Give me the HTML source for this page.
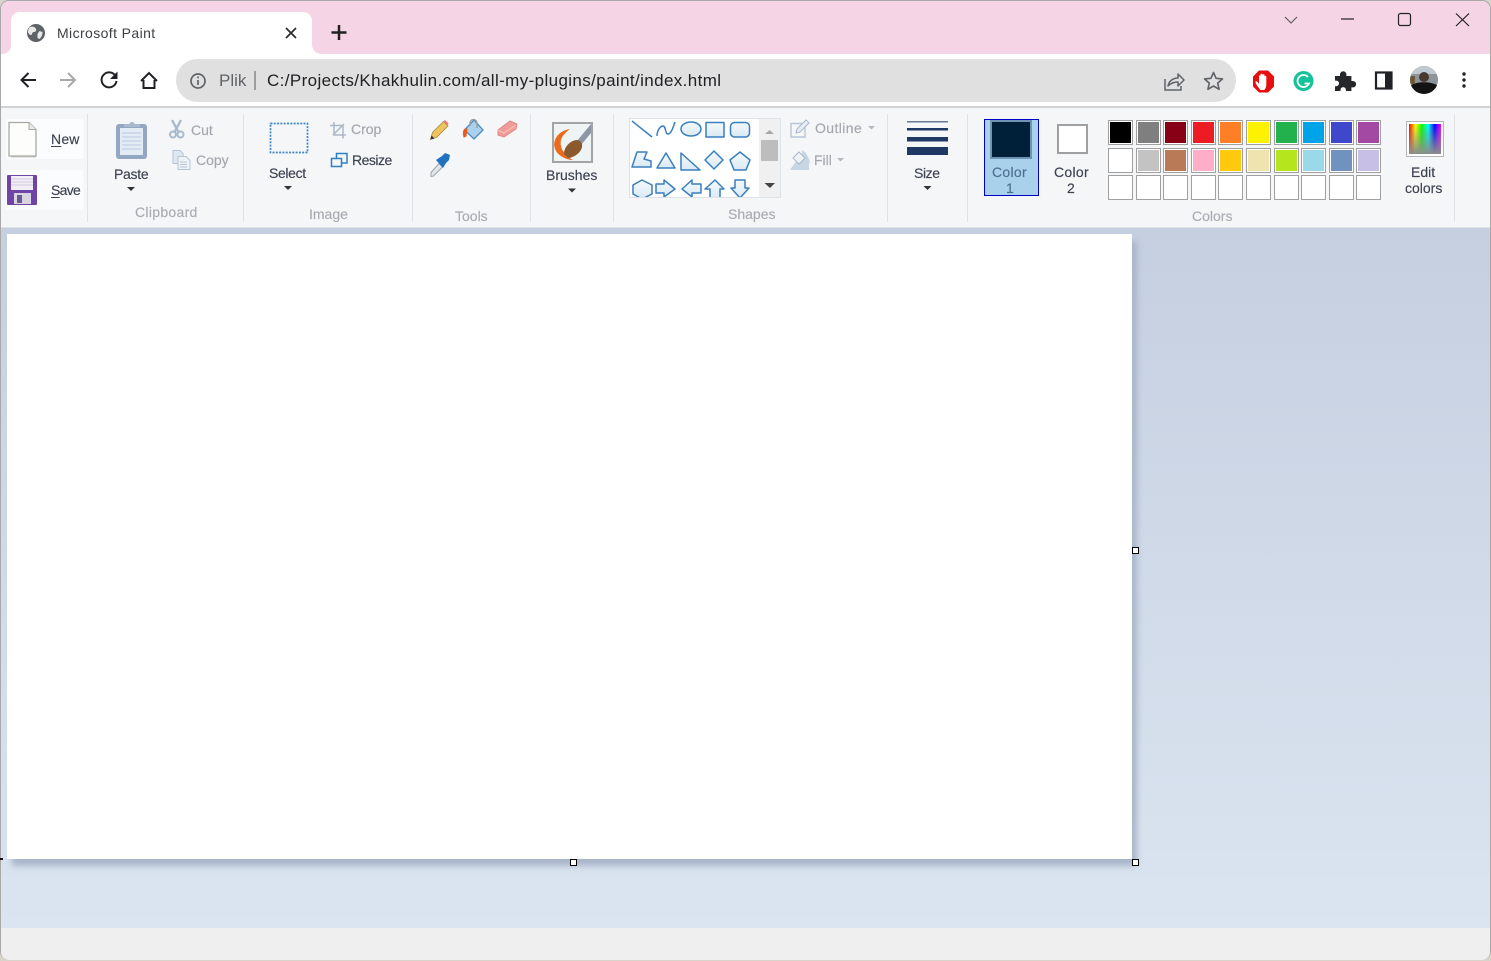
<!DOCTYPE html>
<html><head><meta charset="utf-8"><title>Microsoft Paint</title>
<style>
html,body{margin:0;padding:0;width:1491px;height:961px;overflow:hidden;background:#d8d4cc}
*{box-sizing:border-box}
#w{position:absolute;left:0;top:0;width:1491px;height:960px;border:1px solid #a8a8a8;border-radius:9px;overflow:hidden;background:#fff}
.a{position:absolute}
.t{position:absolute;white-space:nowrap;font:14px/16px "Liberation Sans",sans-serif;color:#3c4250;-webkit-text-stroke:.15px currentColor}
.g{color:#a3a7ad}
.l{color:#a8acb2}
.d{left:0;top:0}
u{text-decoration-thickness:1px;text-underline-offset:2px}
.c{position:absolute;width:25px;height:25px;border:1px solid #a0a0a0;box-shadow:inset 0 0 0 1px #fff;background:#fff}
</style></head><body>
<div id="w"></div>
<div class="a" style="left:1px;top:1px;width:1489px;height:53px;background:#f5d5e5;border-radius:8px 8px 0 0"></div>
<div class="a" style="left:11px;top:12px;width:301px;height:43px;background:#fff;border-radius:9px 9px 0 0"></div>
<div class="a" style="left:1px;top:54px;width:1489px;height:52px;background:#fff"></div>
<div class="a" style="left:1px;top:106px;width:1489px;height:2px;background:#d2d2d2"></div>
<div class="a" style="left:176px;top:59px;width:1060px;height:43px;background:#e0e0e0;border-radius:22px"></div>
<div class="a" style="left:1px;top:108px;width:1489px;height:120px;background:#f4f6f8;border-bottom:1px solid #dde1e8"></div>
<div class="a" style="left:1px;top:228px;width:1489px;height:700px;background:linear-gradient(#c5cfe0,#dbe5f1)"></div>
<div class="a" style="left:7px;top:234px;width:1125px;height:625px;background:#fff;box-shadow:5px 7px 6px 0 #a9b5c9"></div>
<div class="a" style="left:1px;top:928px;width:1489px;height:32px;background:#efefef;border-radius:0 0 8px 8px"></div>
<div class="a" style="left:6px;top:119px;width:77px;height:40px;background:#fbfcfd"></div>
<div class="a" style="left:6px;top:170px;width:77px;height:40px;background:#fbfcfd"></div>
<div class="a" style="left:629px;top:118px;width:152px;height:80px;background:#fff;border:1px solid #dfe3e8"></div>
<div class="a" style="left:759px;top:119px;width:21px;height:78px;background:#f0f0f0"></div>
<div class="a" style="left:761px;top:140px;width:17px;height:21px;background:#bdbdbd"></div>
<div class="a" style="left:984px;top:119px;width:55px;height:77px;background:#aad1ec;border:1px solid #0000cc"></div>
<div class="a" style="left:990px;top:120px;width:42px;height:39px;background:#002039;border:2px solid #6f93b3"></div>
<div class="a" style="left:1057px;top:124px;width:31px;height:30px;background:#fff;border:2px solid #a0a0a0"></div>
<div id="pal">
<div class="c" style="left:1108px;top:120px;background:#000"></div>
<div class="c" style="left:1136px;top:120px;background:#7f7f7f"></div>
<div class="c" style="left:1163px;top:120px;background:#880015"></div>
<div class="c" style="left:1191px;top:120px;background:#ed1c24"></div>
<div class="c" style="left:1218px;top:120px;background:#ff7f27"></div>
<div class="c" style="left:1246px;top:120px;background:#fff200"></div>
<div class="c" style="left:1274px;top:120px;background:#22b14c"></div>
<div class="c" style="left:1301px;top:120px;background:#00a2e8"></div>
<div class="c" style="left:1329px;top:120px;background:#3f48cc"></div>
<div class="c" style="left:1356px;top:120px;background:#a349a4"></div>
<div class="c" style="left:1108px;top:148px"></div>
<div class="c" style="left:1136px;top:148px;background:#c3c3c3"></div>
<div class="c" style="left:1163px;top:148px;background:#b97a57"></div>
<div class="c" style="left:1191px;top:148px;background:#ffaec9"></div>
<div class="c" style="left:1218px;top:148px;background:#ffc90e"></div>
<div class="c" style="left:1246px;top:148px;background:#efe4b0"></div>
<div class="c" style="left:1274px;top:148px;background:#b5e61d"></div>
<div class="c" style="left:1301px;top:148px;background:#99d9ea"></div>
<div class="c" style="left:1329px;top:148px;background:#7092be"></div>
<div class="c" style="left:1356px;top:148px;background:#c8bfe7"></div>
<div class="c" style="left:1108px;top:175px"></div>
<div class="c" style="left:1136px;top:175px"></div>
<div class="c" style="left:1163px;top:175px"></div>
<div class="c" style="left:1191px;top:175px"></div>
<div class="c" style="left:1218px;top:175px"></div>
<div class="c" style="left:1246px;top:175px"></div>
<div class="c" style="left:1274px;top:175px"></div>
<div class="c" style="left:1301px;top:175px"></div>
<div class="c" style="left:1329px;top:175px"></div>
<div class="c" style="left:1356px;top:175px"></div>
</div>
<div class="a" style="left:1407px;top:122px;width:36px;height:34px;border:2px solid #fff;outline:1px solid #b5b5b5;background:linear-gradient(transparent,#8c8c8c),linear-gradient(90deg,#f00,#ff0,#0f0,#0ff,#00f,#f0f)"></div>

<svg class="a d" width="1491" height="961" viewBox="0 0 1491 961" fill="none">
<defs><linearGradient id="sf" x1="0" y1="0" x2="0" y2="1"><stop offset="0" stop-color="#f5fafd"/><stop offset="1" stop-color="#d9e9f3"/></linearGradient>
<clipPath id="gal"><rect x="630" y="119" width="129" height="78"/></clipPath>
<clipPath id="av"><circle cx="1424" cy="80" r="14"/></clipPath></defs>
<!-- tab -->
<path d="M1 54c6 0 10-3 10-9v9zM312 44c0 6 4 10 10 10h-10z" fill="#fff"/>
<circle cx="36" cy="33" r="9" fill="#5f6368"/>
<path d="M30 27c3-1 5 0 6 2s-1 3-2.500 3-1 3-2.500 3-3-2-3-3 .5-4 2-5zM39.500 31l3 1c0 3-1 5-3 7l-2-1 0-4z" fill="#e8e8e8"/>
<path d="M286 28l10 10M296 28l-10 10" stroke="#2a2a2a" stroke-width="1.700"/>
<path d="M339 25v15M331.500 32.500h15" stroke="#222" stroke-width="2.500"/>
<!-- window controls -->
<path d="M1285 17l6 6 6-6" stroke="#555" stroke-width="1.100"/>
<path d="M1341 19h13" stroke="#222" stroke-width="1.200"/>
<rect x="1398.500" y="13.500" width="12" height="12" rx="2" stroke="#222" stroke-width="1.200"/>
<path d="M1456 13.500l13 12.500M1469 13.500l-13 12.500" stroke="#222" stroke-width="1.200"/>
<!-- nav -->
<path d="M36 80H21.500M28.500 73l-7 7 7 7" stroke="#202124" stroke-width="2"/>
<path d="M60 80h15M68 73l7 7-7 7" stroke="#a8a8a8" stroke-width="2"/>
<path d="M115.500 76a7.500 7.500 0 1 0 1 5" stroke="#202124" stroke-width="2"/>
<path d="M117.500 71.500v7.500h-7.500z" fill="#202124"/>
<path d="M141 81l8-8 8 8M143.500 80v8h11v-8" stroke="#202124" stroke-width="2"/>
<circle cx="198" cy="81" r="7" stroke="#5f6368" stroke-width="1.700"/>
<path d="M198 80v5M198 76.500v1.700" stroke="#5f6368" stroke-width="1.700"/>
<path d="M255 71v19" stroke="#888" stroke-width="1.500"/>
<!-- omnibox right -->
<path d="M1165 79v11h16v-4" stroke="#5f6368" stroke-width="1.500"/>
<path d="M1168 86c1-5 5-8 10-8v-4l6 6-6 6v-4c-4 0-7 1-10 4z" stroke="#5f6368" stroke-width="1.500" stroke-linejoin="round"/>
<path d="M1213.500 72.500l2.600 5.800 6.400.6-4.800 4.200 1.400 6.200-5.600-3.300-5.600 3.300 1.400-6.200-4.800-4.200 6.400-.6z" stroke="#5f6368" stroke-width="1.600" stroke-linejoin="round"/>
<!-- extensions -->
<path d="M1259 70.500h9l6 6v10l-6 6h-9l-6-6v-10z" fill="#e60e0e"/>
<path d="M1259 88c-2-2-3.500-5-3.500-6s1-1 2 0l1.500 2v-8c0-1 1.500-1 1.500 0v4-5.500c0-1 2-1 2 0V80v-5c0-1 2-1 2 0v5.500-4c0-1 1.800-1 1.800 0V85c0 2-1 4-2 5h-4z" fill="#fff"/>
<circle cx="1303.500" cy="81" r="10" fill="#15c39a"/>
<path d="M1308 77a6 6 0 1 0 1 6.500h-4.500" stroke="#fff" stroke-width="1.800"/>
<path d="M1335 76h5v-1.500a3.200 3.200 0 0 1 6.400 0V76h5v5h1.500a3.200 3.200 0 0 1 0 6.400H1351.400V91h-5.500v-1.200a2.700 2.700 0 0 0-5.400 0V91H1335v-4.800h1.200a2.800 2.800 0 0 0 0-5.600H1335z" fill="#25272b"/>
<rect x="1376" y="72.500" width="15.500" height="16" stroke="#202124" stroke-width="2.200"/>
<rect x="1385" y="72.500" width="7" height="16" fill="#202124"/>
<g clip-path="url(#av)"><rect x="1410" y="66" width="28" height="28" fill="#8d949a"/><rect x="1410" y="66" width="28" height="8" fill="#c0c8d0"/><circle cx="1424" cy="77" r="5" fill="#4a3a30"/><path d="M1410 94v-8c5-5 23-5 28 0v8z" fill="#131313"/><rect x="1410" y="76" width="5" height="8" fill="#6b5a3a"/></g>
<circle cx="1464" cy="74" r="1.700" fill="#202124"/><circle cx="1464" cy="80" r="1.700" fill="#202124"/><circle cx="1464" cy="86" r="1.700" fill="#202124"/>
<!-- separators -->
<path d="M87.500 114v108M243.500 114v108M412.500 114v108M530.500 114v108M613.500 114v108M887.500 114v108M967.500 114v108M1454.500 114v108" stroke="#dfe3e8"/>
<!-- new -->
<path d="M9 122.500h20l7 7v26.500H9z" fill="#fdfdfb" stroke="#a9a9a3" stroke-width="1.300"/>
<path d="M29 122.500v7h7" fill="#e8e8e4" stroke="#a9a9a3"/>
<path d="M11 157h25" stroke="#c9c9c9"/>
<!-- save -->
<rect x="7" y="175" width="30" height="30" rx="1" fill="#6f43a8"/>
<rect x="11" y="176" width="22" height="14" fill="#f1eef6"/>
<path d="M11 179h22M11 182h22M11 185h22" stroke="#d2cbe0"/>
<rect x="14" y="193" width="17" height="11" fill="#d9d5e0"/>
<rect x="17" y="195" width="5" height="8" fill="#6a5a90"/>
<!-- paste -->
<rect x="116" y="124" width="31" height="35" rx="3" fill="#93a7c2"/>
<rect x="120" y="128" width="23" height="27" fill="#e3ebf4"/>
<path d="M122 133h19M122 137h19M122 141h19M122 145h19M122 149h19" stroke="#b9cade"/>
<path d="M124 127v-3h5l2-2h2l2 2h5v3z" fill="#a9b9cf"/>
<path d="M127 187h8l-4 4z M284 186h8l-4 4z M568 188.500h8l-4 4z M923.500 186h8l-4 4z" fill="#333"/>
<!-- cut copy -->
<path d="M172 120l7 13M181 120l-7 13" stroke="#a9b9cc" stroke-width="2.300"/>
<circle cx="173" cy="134.500" r="3" stroke="#a9b9cc" stroke-width="2"/><circle cx="180.500" cy="134.500" r="3" stroke="#a9b9cc" stroke-width="2"/>
<path d="M173 150.500h7l3 3v10h-10z" fill="#dfe8f1" stroke="#b6c5d5"/>
<path d="M178 156.500h8l4 4v9h-12z" fill="#eef3f8" stroke="#b6c5d5"/>
<path d="M180 162h7M180 164.500h7M180 167h7" stroke="#b6c5d5"/>
<!-- select crop resize -->
<rect x="270.500" y="123.500" width="37" height="29" stroke="#3f86c2" stroke-width="1.700" stroke-dasharray="2 1.300"/>
<path d="M334 122v13h12M330 125.500h13v13M333 135l11-11" stroke="#abb8c8" stroke-width="1.500"/>
<rect x="336.500" y="153.500" width="10.500" height="9.500" fill="#f4f6f8" stroke="#2e7fc0" stroke-width="1.500"/>
<rect x="331.500" y="158.500" width="10" height="8" fill="#f4f6f8" stroke="#2e7fc0" stroke-width="1.500"/>
<!-- tools -->
<path d="M430.500 139.500l2-7 11-11 4.500 4.500-11 11z" fill="#eec45c" stroke="#a98a45" stroke-width=".8"/>
<path d="M430.500 139.500l1-4 3 3z" fill="#333"/><path d="M443.500 121.500l1.500-1.500 3.500 3.500-1 2z" fill="#e77"/>
<path d="M474 120l9 10-9 9-9.500-9z" fill="#a9d0ec" stroke="#4b8cc4" stroke-width="1.300"/>
<path d="M470 126v-3a3.500 3.500 0 0 1 7 0v5" stroke="#9b9b9b" stroke-width="1.300"/>
<path d="M465 129c-2 2-2 5-1 8l2-1 1-7z" fill="#ea5a1a" stroke="#ea5a1a"/>
<path d="M498 130l12-9 7 3-1 5-12 8-6-2z" fill="#f29a9a" stroke="#dd8a86"/>
<path d="M498 130l6 3 12-8" stroke="#f6c0b4" stroke-width="1.200"/>
<path d="M431 172.500l8-9 3.500 3.500-9 9-2.500.5z" fill="#e2e6ea" stroke="#9ca4ac"/>
<path d="M436 160l6-4 3-3 5 2-1 5-3 3-3 5z" fill="#1f72bf"/>
<!-- brushes -->
<rect x="553" y="123" width="39" height="39" fill="#eef4f4" stroke="#a4a4a4" stroke-width="2"/>
<path d="M591 124l-14 17 4 4 10-12z" fill="#8d96a4"/>
<path d="M570 129c-13 2-19 13-14 22 3 5 10 9 17 9-7-4-14-11-12-20 1-4 5-8 9-11z" fill="#ec6a1c"/>
<path d="M564 154c0-7 6-13 12-14 4 0 7 3 6 7-1 6-9 11-14 11z" fill="#8a5a2c"/>
<!-- gallery -->
<g clip-path="url(#gal)" stroke="#3a7fbd" stroke-width="1.500" fill="url(#sf)" stroke-linejoin="round">
<path d="M632 121l20 16" fill="none"/>
<path d="M657 136c0-5 3-10 6-10s2 8 5 8 5-6 7-12" fill="none"/>
<ellipse cx="691" cy="129" rx="10" ry="7"/>
<rect x="706" y="122.500" width="18" height="14.500"/>
<rect x="730.500" y="122.500" width="19" height="14.500" rx="4"/>
<path d="M632 167l5-15h10l-3 7 7 2v6z"/>
<path d="M657 168l9-15 9 15z"/>
<path d="M681 153v17h19z"/>
<path d="M714 151l9 9-9 9-9-9z"/>
<path d="M740 152l10 8-4 10h-12l-4-10z"/>
<path d="M642 180l10 5v9l-10 5-9-5v-9z"/>
<path d="M656 184h8v-4l11 9-11 8v-4h-8z"/>
<path d="M682 189l10-9v4h9v9h-9v4z"/>
<path d="M705 189l10-9 9 9h-4v10h-10v-10z"/>
<path d="M735 180h10v8h4l-9 10-9-10h4z"/>
</g>
<path d="M765 134l4.500-4 4.500 4z" fill="#a8a8a8"/>
<path d="M764.500 183h10.500l-5 5z" fill="#444"/>
<!-- outline fill -->
<path d="M791 123.500h12M791 123v14h14v-11" stroke="#b9c6d6" stroke-width="1.400"/>
<path d="M796 133l1-4 9-9 3 3-9 9z" fill="#e6edf4" stroke="#a9b8ca"/>
<path d="M790 170l4-6 8-9v-5l4 3 4 8-1 3 0 6z" fill="#c8d5e3"/>
<path d="M799 152l-6 6 6 6 6-6z" fill="#eef3f8" stroke="#a9b8ca"/>
<path d="M868 126h7l-3.500 3.500zM837 158h7l-3.500 3.500z" fill="#b5b9c0"/>
<!-- size -->
<rect x="907" y="121" width="41" height="1.500" fill="#6a7a94"/>
<rect x="907" y="128" width="41" height="2.500" fill="#1f3864"/>
<rect x="907" y="137" width="41" height="4.500" fill="#1f3864"/>
<rect x="907" y="147" width="41" height="8" fill="#1f3864"/>
<!-- handles -->
<rect x="1132.500" y="547.500" width="6" height="6" fill="#fff" stroke="#000"/>
<rect x="570.500" y="859.500" width="6" height="6" fill="#fff" stroke="#000"/>
<rect x="1132.500" y="859.500" width="6" height="6" fill="#fff" stroke="#000"/>
<rect x="0" y="858" width="3" height="2" fill="#111"/>
</svg>

<div class="t" style="left:57px;top:25px;color:#3c4043;letter-spacing:.4px;-webkit-text-stroke:0">Microsoft Paint</div>
<div class="t" style="left:219px;top:72px;font-size:17px;line-height:18px;color:#5f6368;-webkit-text-stroke:0">Plik</div>
<div class="t" style="left:267px;top:72px;font-size:17px;line-height:18px;color:#202124;letter-spacing:.38px;-webkit-text-stroke:0">C:/Projects/Khakhulin.com/all-my-plugins/paint/index.html</div>
<div class="t" style="left:51px;top:131px;letter-spacing:.2px"><u>N</u>ew</div>
<div class="t" style="left:51px;top:182px;letter-spacing:-.7px"><u>S</u>ave</div>
<div class="t" style="left:114px;top:166px;letter-spacing:-.3px">Paste</div>
<div class="t g" style="left:191px;top:122px">Cut</div>
<div class="t g" style="left:196px;top:152px">Copy</div>
<div class="t l" style="left:135px;top:204px;letter-spacing:.3px">Clipboard</div>
<div class="t" style="left:269px;top:165px;letter-spacing:-.35px">Select</div>
<div class="t g" style="left:351px;top:121px">Crop</div>
<div class="t" style="left:352px;top:152px;letter-spacing:-.5px">Resize</div>
<div class="t l" style="left:309px;top:206px">Image</div>
<div class="t l" style="left:455px;top:208px">Tools</div>
<div class="t" style="left:546px;top:167px">Brushes</div>
<div class="t l" style="left:728px;top:206px">Shapes</div>
<div class="t g" style="left:815px;top:120px;letter-spacing:.4px">Outline</div>
<div class="t g" style="left:814px;top:152px">Fill</div>
<div class="t" style="left:914px;top:165px;letter-spacing:-.4px">Size</div>
<div class="t" style="left:992px;top:164px;color:#4d6f90;letter-spacing:.3px">Color</div>
<div class="t" style="left:1006px;top:180px;color:#4d6f90">1</div>
<div class="t" style="left:1054px;top:164px;letter-spacing:.3px">Color</div>
<div class="t" style="left:1067px;top:180px">2</div>
<div class="t l" style="left:1192px;top:208px">Colors</div>
<div class="t" style="left:1411px;top:164px">Edit</div>
<div class="t" style="left:1405px;top:180px">colors</div>
</body></html>
